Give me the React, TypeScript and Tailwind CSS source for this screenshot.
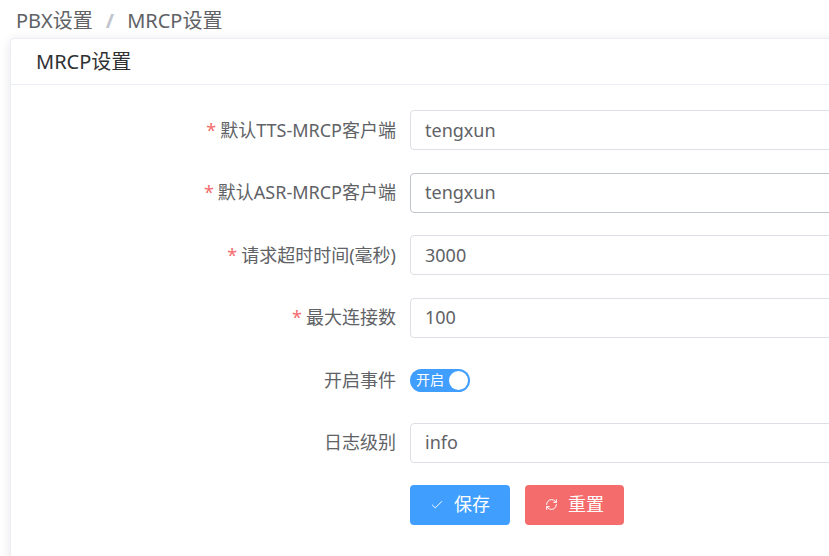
import { Check, RefreshCw } from "lucide-react";

const font = { fontFamily: '"Noto Sans", "Noto Sans CJK SC", sans-serif' };

type Row = { label: string; value?: string; required?: boolean; hover?: boolean; kind?: "input" | "switch" };

const rows: Row[] = [
  { label: "默认TTS-MRCP客户端", value: "tengxun", required: true },
  { label: "默认ASR-MRCP客户端", value: "tengxun", required: true, hover: true },
  { label: "请求超时时间(毫秒)", value: "3000", required: true },
  { label: "最大连接数", value: "100", required: true },
  { label: "开启事件", kind: "switch" },
  { label: "日志级别", value: "info" },
];

function Field({ row }: { row: Row }) {
  return (
    <div className="flex items-center h-10">
      <label className="w-[399px] shrink-0 pr-[14px] text-right text-[18px] text-[#606266]">
        {row.required && <span className="text-[#f56c6c] mr-1">*</span>}
        {row.label}
      </label>
      {row.kind === "switch" ? (
        <div className="flex items-center w-[60px] h-[23px] rounded-full bg-[#409eff] pl-[6px] pr-[2px]">
          <span className="text-white text-[14px] leading-none">开启</span>
          <span className="ml-auto w-[19px] h-[19px] rounded-full bg-white" />
        </div>
      ) : (
        <div
          className={
            "flex items-center h-10 w-[600px] rounded border bg-white pl-[14px] text-[18px] text-[#606266] " +
            (row.hover ? "border-[#c0c4cc]" : "border-[#dcdfe6]")
          }
        >
          {row.value}
        </div>
      )}
    </div>
  );
}

export default function App() {
  return (
    <div className="w-[829px] h-[556px] overflow-hidden bg-white" style={font}>
      <div className="flex items-center h-[38px] pl-4 pt-[4px] text-[20px] text-[#606266]">
        <span>PBX设置</span>
        <span className="mx-[13px] text-[#c0c4cc] font-bold">/</span>
        <span>MRCP设置</span>
      </div>
      <div className="ml-[10px] w-[1000px] rounded border border-[#ebeef5] bg-white shadow-[0_2px_12px_0_rgba(0,0,0,0.1)]">
        <div className="h-[46px] flex items-center pl-[25px] border-b border-[#ebeef5] text-[20px] text-[#303133]">
          MRCP设置
        </div>
        <div className="pt-[25px] pb-[80px] flex flex-col gap-[22.6px]">
          {rows.map((r) => (
            <Field key={r.label} row={r} />
          ))}
          <div className="flex h-10 pl-[399px] gap-[15px] -mt-px">
            <button className="flex items-center justify-center w-[100px] h-10 rounded bg-[#409eff] text-white text-[18px]">
              <Check className="w-[14px] h-[14px] mr-[10px]" strokeWidth={1.6} />
              保存
            </button>
            <button className="flex items-center justify-center w-[99px] h-10 rounded bg-[#f56c6c] text-white text-[18px]">
              <RefreshCw className="w-[13px] h-[13px] mr-[10px]" strokeWidth={1.8} />
              重置
            </button>
          </div>
        </div>
      </div>
    </div>
  );
}
